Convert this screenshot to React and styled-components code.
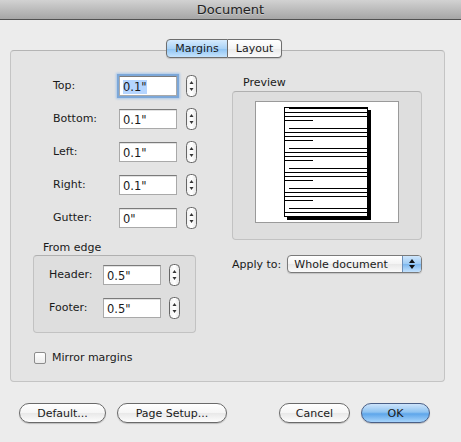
import React from "react";
import styled, { createGlobalStyle } from "styled-components";

const Global = createGlobalStyle`
  html, body { margin: 0; padding: 0; background: #ececec; }
  body { font-family: "DejaVu Sans", "Liberation Sans", sans-serif; color: #1a1a1a; }
`;

const Window = styled.div`
  width: 461px;
  height: 442px;
  background: #ececec;
  display: flex;
  flex-direction: column;
  overflow: hidden;
`;

const TitleBar = styled.div`
  height: 19px;
  border-bottom: 1px solid #515151;
  background: linear-gradient(#d2d2d2, #a6a6a6);
  display: flex;
  align-items: center;
  justify-content: center;
  font-size: 13px;
  color: #222;
  text-shadow: 0 1px 0 rgba(255, 255, 255, 0.35);
`;

const Body = styled.div`
  padding: 19px 16px 0 10px;
  display: flex;
  flex-direction: column;
`;

const TabBar = styled.div`
  display: flex;
  justify-content: center;
  margin: 0 0 -8px -7px;
  position: relative;
  z-index: 1;
`;

const Tab = styled.div`
  width: ${(p) => p.$w}px;
  height: 17px;
  display: flex;
  align-items: center;
  justify-content: center;
  font-size: 11px;
  border: 1px solid #6e6e6e;
  border-left-width: ${(p) => (p.$first ? 1 : 0)}px;
  border-radius: ${(p) => (p.$first ? "4px 0 0 4px" : "0 4px 4px 0")};
  background: ${(p) =>
    p.$active
      ? "linear-gradient(#d6ebfd 0%, #a9d2f6 50%, #8cc2f2 51%, #c6e4fd 100%)"
      : "linear-gradient(#ffffff 0%, #f4f4f4 50%, #e9e9e9 51%, #fbfbfb 100%)"};
  box-shadow: 0 1px 1px rgba(0, 0, 0, 0.15);
`;

const GroupBox = styled.div`
  border: 1px solid #c4c4c4;
  border-top-color: #b4b4b4;
  border-radius: 4px;
  background: #e4e4e4;
  padding: 25px 0 0 22px;
  display: flex;
  height: 305px;
`;

const LeftCol = styled.div`
  width: 199px;
  display: flex;
  flex-direction: column;
`;

const Fields = styled.div`
  display: grid;
  grid-template-columns: ${(p) => p.$label}px 58px auto;
  grid-auto-rows: 20px;
  row-gap: 13px;
  align-items: center;
  margin-left: ${(p) => p.$indent}px;
`;

const Label = styled.div`
  font-size: 11px;
  line-height: 14px;
`;

const Input = styled.div`
  width: 58px;
  height: 20px;
  box-sizing: border-box;
  background: #fff;
  border: 1px solid #a9a9a9;
  border-top-color: #7b7b7b;
  box-shadow: ${(p) => (p.$focus ? "0 0 0 2px #7ca7d8, 0 0 2px 3px #a9c7ea" : "inset 0 1px 0 #e2e2e2")};
  font-size: 11.5px;
  padding: 2px 0 0 3px;
  display: flex;
  align-items: center;
`;

const Selected = styled.span`
  background: #b5d5ff;
`;

const StepperWrap = styled.div`
  margin-left: ${(p) => p.$gap}px;
  height: 20px;
  display: flex;
  align-items: center;
`;

const SubTitle = styled.div`
  font-size: 11px;
  line-height: 14px;
  padding-left: ${(p) => p.$pad}px;
  margin-top: ${(p) => p.$top}px;
`;

const InsetBox = styled.div`
  border: 1px solid #c2c2c2;
  border-top-color: #b0b0b0;
  border-radius: 4px;
  background: #dedede;
`;

const EdgeBox = styled(InsetBox)`
  width: 163px;
  height: 78px;
  padding-top: 9px;
  box-sizing: border-box;
`;

const CheckRow = styled.label`
  display: flex;
  align-items: center;
  gap: 6px;
  margin-top: 18px;
  padding-left: 1px;
  font-size: 11px;
`;

const Check = styled.span`
  width: 12px;
  height: 12px;
  box-sizing: border-box;
  border: 1px solid #8c8c8c;
  border-radius: 2px;
  background: linear-gradient(#fff, #ececec);
`;

const RightCol = styled.div`
  width: 190px;
  display: flex;
  flex-direction: column;
`;

const PreviewBox = styled(InsetBox)`
  margin-top: 1px;
  height: 149px;
  box-sizing: border-box;
  display: flex;
  justify-content: center;
  padding-top: 9px;
`;

const Paper = styled.div`
  width: 144px;
  height: 122px;
  box-sizing: border-box;
  background: #fff;
  border: 1px solid #9a9a9a;
`;

const ApplyRow = styled.div`
  margin-top: 15px;
  display: flex;
  align-items: center;
  gap: 6px;
  font-size: 11px;
  white-space: nowrap;
`;

const Select = styled.div`
  width: 135px;
  flex-shrink: 0;
  height: 18px;
  box-sizing: border-box;
  border: 1px solid #7a7a7a;
  border-radius: 4px;
  background: linear-gradient(#ffffff 0%, #f3f3f3 50%, #e8e8e8 51%, #fafafa 100%);
  display: flex;
  font-size: 11px;
  overflow: hidden;
  box-shadow: 0 1px 1px rgba(0, 0, 0, 0.15);
`;

const SelectText = styled.div`
  flex: 1;
  padding-left: 6px;
  display: flex;
  align-items: center;
`;

const SelectArrows = styled.div`
  width: 18px;
  border-left: 1px solid #6d8fb8;
  background: linear-gradient(#cfe6fc 0%, #9ccaf4 50%, #7bb6ee 51%, #c4e2fd 100%);
  display: flex;
  align-items: center;
  justify-content: center;
`;

const ButtonRow = styled.div`
  margin-top: 21px;
  display: flex;
  padding: 0 15px 0 9px;
  gap: 11px;
`;

const Spacer = styled.div`
  flex: 1;
`;

const Button = styled.div`
  width: ${(p) => p.$w}px;
  height: 20px;
  box-sizing: border-box;
  border: 1px solid ${(p) => (p.$primary ? "#4a5f86" : "#6a6a6a")};
  border-radius: 10px;
  display: flex;
  align-items: center;
  justify-content: center;
  font-size: 11px;
  background: ${(p) =>
    p.$primary
      ? "linear-gradient(#cde4fb 0%, #8ec3f1 45%, #5ea6ea 55%, #a7d4fb 100%)"
      : "linear-gradient(#ffffff 0%, #f5f5f5 50%, #e8e8e8 51%, #fdfdfd 100%)"};
  box-shadow: 0 1px 1px rgba(0, 0, 0, 0.2);
`;

function Stepper() {
  return (
    <svg width="11" height="22" viewBox="0 0 11 22">
      <defs>
        <linearGradient id="stg" x1="0" y1="0" x2="1" y2="0">
          <stop offset="0" stopColor="#f0f0f0" />
          <stop offset="0.5" stopColor="#ffffff" />
          <stop offset="1" stopColor="#e6e6e6" />
        </linearGradient>
      </defs>
      <rect x="0.5" y="0.5" width="10" height="21" rx="4" fill="url(#stg)" stroke="#666" />
      <path d="M5.5 6 L7.5 9 L3.5 9 Z" fill="#333" />
      <path d="M5.5 16 L7.5 13 L3.5 13 Z" fill="#333" />
    </svg>
  );
}

function UpDown() {
  return (
    <svg width="8" height="12" viewBox="0 0 8 12">
      <path d="M4 1 L7 5 L1 5 Z" fill="#111" />
      <path d="M4 11 L7 7 L1 7 Z" fill="#111" />
    </svg>
  );
}

function PagePreview() {
  const blocks = [0, 1, 2, 3, 4];
  return (
    <svg width="142" height="120" viewBox="0 0 142 120">
      <rect x="31" y="8" width="84" height="110" fill="#000" />
      <rect x="28.5" y="5.5" width="83" height="109" fill="#fff" stroke="#000" />
      <line x1="33" y1="6" x2="112" y2="6" stroke="#000" strokeWidth="2" />
      {blocks.map((k) => {
        const b = 10.5 + 20 * k;
        return (
          <g key={k} stroke="#000" strokeWidth="1">
            <line x1="28" y1={b} x2="112" y2={b} />
            <line x1="28" y1={b + 4} x2="112" y2={b + 4} />
            <line x1="28" y1={b + 8} x2="57" y2={b + 8} />
            <line x1="33" y1={b + 16} x2="112" y2={b + 16} />
          </g>
        );
      })}
      <line x1="28" y1="110.5" x2="112" y2="110.5" stroke="#000" />
    </svg>
  );
}

const margins = [
  ["Top:", "0.1\"", true],
  ["Bottom:", "0.1\""],
  ["Left:", "0.1\""],
  ["Right:", "0.1\""],
  ["Gutter:", "0\""],
];

export default function App() {
  return (
    <Window>
      <Global />
      <TitleBar>Document</TitleBar>
      <Body>
        <TabBar>
          <Tab $w={60} $first $active>Margins</Tab>
          <Tab $w={53}>Layout</Tab>
        </TabBar>
        <GroupBox>
          <LeftCol>
            <Fields $label={66} $indent={20}>
              {margins.map(([label, value, focus]) => (
                <React.Fragment key={label}>
                  <Label>{label}</Label>
                  <Input $focus={focus}>{focus ? <Selected>{value}</Selected> : value}</Input>
                  <StepperWrap $gap={9}>
                    <Stepper />
                  </StepperWrap>
                </React.Fragment>
              ))}
            </Fields>
            <SubTitle $pad={10} $top={13}>From edge</SubTitle>
            <EdgeBox>
              <Fields $label={54} $indent={15}>
                <Label>Header:</Label>
                <Input>0.5"</Input>
                <StepperWrap $gap={8}>
                  <Stepper />
                </StepperWrap>
                <Label>Footer:</Label>
                <Input>0.5"</Input>
                <StepperWrap $gap={8}>
                  <Stepper />
                </StepperWrap>
              </Fields>
            </EdgeBox>
            <CheckRow>
              <Check />
              Mirror margins
            </CheckRow>
          </LeftCol>
          <RightCol>
            <SubTitle $pad={11} $top={0}>Preview</SubTitle>
            <PreviewBox>
              <Paper>
                <PagePreview />
              </Paper>
            </PreviewBox>
            <ApplyRow>
              Apply to:
              <Select>
                <SelectText>Whole document</SelectText>
                <SelectArrows>
                  <UpDown />
                </SelectArrows>
              </Select>
            </ApplyRow>
          </RightCol>
        </GroupBox>
        <ButtonRow>
          <Button $w={87}>Default...</Button>
          <Button $w={110}>Page Setup...</Button>
          <Spacer />
          <Button $w={71}>Cancel</Button>
          <Button $w={69} $primary>OK</Button>
        </ButtonRow>
      </Body>
    </Window>
  );
}
